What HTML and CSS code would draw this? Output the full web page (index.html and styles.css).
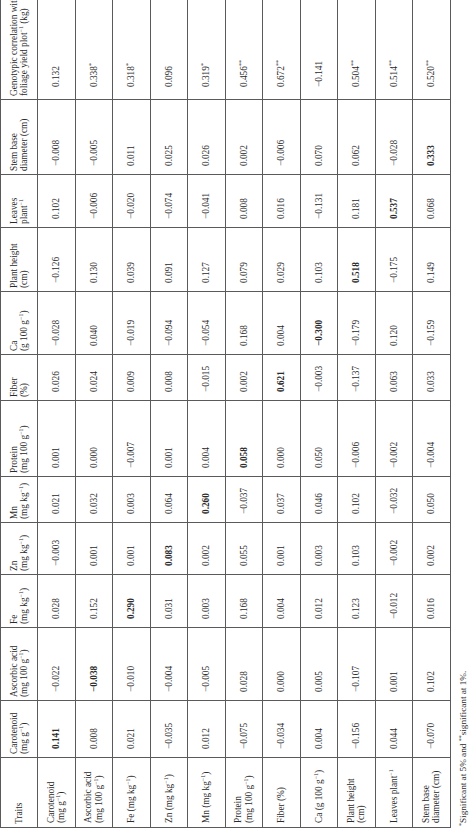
FILE: index.html
```html
<!DOCTYPE html>
<html lang="en">
<head>
<meta charset="utf-8">
<title>Genotypic correlation table</title>
<link rel="stylesheet" href="styles.css">
</head>
<body>
<div class="stage">
  <div class="page">
    <table class="corr">
      <colgroup>
        <col class="c-traits"><col class="c-car"><col class="c-asc"><col class="c-fe"><col class="c-zn"><col class="c-mn"><col class="c-prot"><col class="c-fib"><col class="c-ca"><col class="c-ph"><col class="c-lv"><col class="c-sb"><col class="c-gen">
      </colgroup>
      <thead>
        <tr class="head">
          <th>Traits</th>
          <th>Carotenoid<br>(mg g<sup>−1</sup>)</th>
          <th>Ascorbic acid<br>(mg 100 g<sup>−1</sup>)</th>
          <th>Fe<br>(mg kg<sup>−1</sup>)</th>
          <th>Zn<br>(mg kg<sup>−1</sup>)</th>
          <th>Mn<br>(mg kg<sup>−1</sup>)</th>
          <th>Protein<br>(mg 100 g<sup>−1</sup>)</th>
          <th>Fiber<br>(%)</th>
          <th>Ca<br>(g 100 g<sup>−1</sup>)</th>
          <th>Plant height<br>(cm)</th>
          <th>Leaves<br>plant<sup>−1</sup></th>
          <th>Stem base<br>diameter (cm)</th>
          <th>Genotypic correlation with<br>foliage yield plot<sup>−1</sup> (kg)</th>
        </tr>
      </thead>
      <tbody>
        <tr><th>Carotenoid<br>(mg g<sup>−1</sup>)</th><td><b>0.141</b></td><td>−0.022</td><td>0.028</td><td>−0.003</td><td>0.021</td><td>0.001</td><td>0.026</td><td>−0.028</td><td>−0.126</td><td>0.102</td><td>−0.008</td><td class="gen">0.132</td></tr>
        <tr><th>Ascorbic acid<br>(mg 100 g<sup>−1</sup>)</th><td>0.008</td><td><b>−0.038</b></td><td>0.152</td><td>0.001</td><td>0.032</td><td>0.000</td><td>0.024</td><td>0.040</td><td>0.130</td><td>−0.006</td><td>−0.005</td><td class="gen">0.338<sup>*</sup></td></tr>
        <tr><th>Fe (mg kg<sup>−1</sup>)</th><td>0.021</td><td>−0.010</td><td><b>0.290</b></td><td>0.001</td><td>0.003</td><td>−0.007</td><td>0.009</td><td>−0.019</td><td>0.039</td><td>−0.020</td><td>0.011</td><td class="gen">0.318<sup>*</sup></td></tr>
        <tr><th>Zn (mg kg<sup>−1</sup>)</th><td>−0.035</td><td>−0.004</td><td>0.031</td><td><b>0.083</b></td><td>0.064</td><td>0.001</td><td>0.008</td><td>−0.094</td><td>0.091</td><td>−0.074</td><td>0.025</td><td class="gen">0.096</td></tr>
        <tr><th>Mn (mg kg<sup>−1</sup>)</th><td>0.012</td><td>−0.005</td><td>0.003</td><td>0.002</td><td><b>0.260</b></td><td>0.004</td><td>−0.015</td><td>−0.054</td><td>0.127</td><td>−0.041</td><td>0.026</td><td class="gen">0.319<sup>*</sup></td></tr>
        <tr><th>Protein<br>(mg 100 g<sup>−1</sup>)</th><td>−0.075</td><td>0.028</td><td>0.168</td><td>0.055</td><td>−0.037</td><td><b>0.058</b></td><td>0.002</td><td>0.168</td><td>0.079</td><td>0.008</td><td>0.002</td><td class="gen">0.456<sup>**</sup></td></tr>
        <tr><th>Fiber (%)</th><td>−0.034</td><td>0.000</td><td>0.004</td><td>0.001</td><td>0.037</td><td>0.000</td><td><b>0.621</b></td><td>0.004</td><td>0.029</td><td>0.016</td><td>−0.006</td><td class="gen">0.672<sup>**</sup></td></tr>
        <tr><th>Ca (g 100 g<sup>−1</sup>)</th><td>0.004</td><td>0.005</td><td>0.012</td><td>0.003</td><td>0.046</td><td>0.050</td><td>−0.003</td><td><b>−0.300</b></td><td>0.103</td><td>−0.131</td><td>0.070</td><td class="gen">−0.141</td></tr>
        <tr><th>Plant height<br>(cm)</th><td>−0.156</td><td>−0.107</td><td>0.123</td><td>0.103</td><td>0.102</td><td>−0.006</td><td>−0.137</td><td>−0.179</td><td><b>0.518</b></td><td>0.181</td><td>0.062</td><td class="gen">0.504<sup>**</sup></td></tr>
        <tr><th>Leaves plant<sup>−1</sup></th><td>0.044</td><td>0.001</td><td>−0.012</td><td>−0.002</td><td>−0.032</td><td>−0.002</td><td>0.063</td><td>0.120</td><td>−0.175</td><td><b>0.537</b></td><td>−0.028</td><td class="gen">0.514<sup>**</sup></td></tr>
        <tr><th>Stem base<br>diameter (cm)</th><td>−0.070</td><td>0.102</td><td>0.016</td><td>0.002</td><td>0.050</td><td>−0.004</td><td>0.033</td><td>−0.159</td><td>0.149</td><td>0.068</td><td><b>0.333</b></td><td class="gen">0.520<sup>**</sup></td></tr>
      </tbody>
    </table>
    <p class="note"><sup>*</sup>Significant at 5% and <sup>**</sup>significant at 1%.</p>
  </div>
</div>
</body>
</html>
```

FILE: styles.css
```css
html, body {
  margin: 0;
  padding: 0;
  background: #ffffff;
}

.stage {
  width: 474px;
  height: 832px;
  overflow: hidden;
}

.page {
  width: 900px;
  height: 474px;
  transform-origin: 0 0;
  transform: rotate(-90deg) translateX(-832px);
  font-family: "Liberation Serif", "Times New Roman", serif;
  font-size: 9.3px;
  line-height: 10.5px;
  color: #2a2a2a;
}

.corr {
  border-collapse: collapse;
  table-layout: fixed;
  width: 867px;
  margin-top: -5px;
  margin-left: -1px;
}

.c-traits { width: 70px; }
.c-car { width: 57px; }
.c-asc { width: 73px; }
.c-fe { width: 53px; }
.c-zn { width: 52px; }
.c-mn { width: 46px; }
.c-prot { width: 76px; }
.c-fib { width: 46px; }
.c-ca { width: 63px; }
.c-ph { width: 64px; }
.c-lv { width: 53px; }
.c-sb { width: 75px; }
.c-gen { width: 139px; }

.corr th,
.corr td {
  border: 1px solid #5a5a5a;
  padding: 0 3px 0 4px;
  text-align: left;
  vertical-align: middle;
  white-space: nowrap;
  font-weight: normal;
}

.corr thead th {
  padding-left: 3px;
}

.corr td {
  padding-left: 8px;
}

.corr tr {
  height: 37.5px;
}

.corr .head {
  height: 37px;
}

.corr td.gen {
  padding-left: 12px;
}

.corr b {
  font-weight: bold;
}

.corr sup {
  font-size: 6px;
  line-height: 0;
  vertical-align: 4px;
}

.note sup {
  font-size: 6px;
  line-height: 0;
  vertical-align: 3px;
}

.note {
  margin: 7px 0 0 1px;
  font-size: 9.2px;
  line-height: 10px;
  white-space: nowrap;
}
```
